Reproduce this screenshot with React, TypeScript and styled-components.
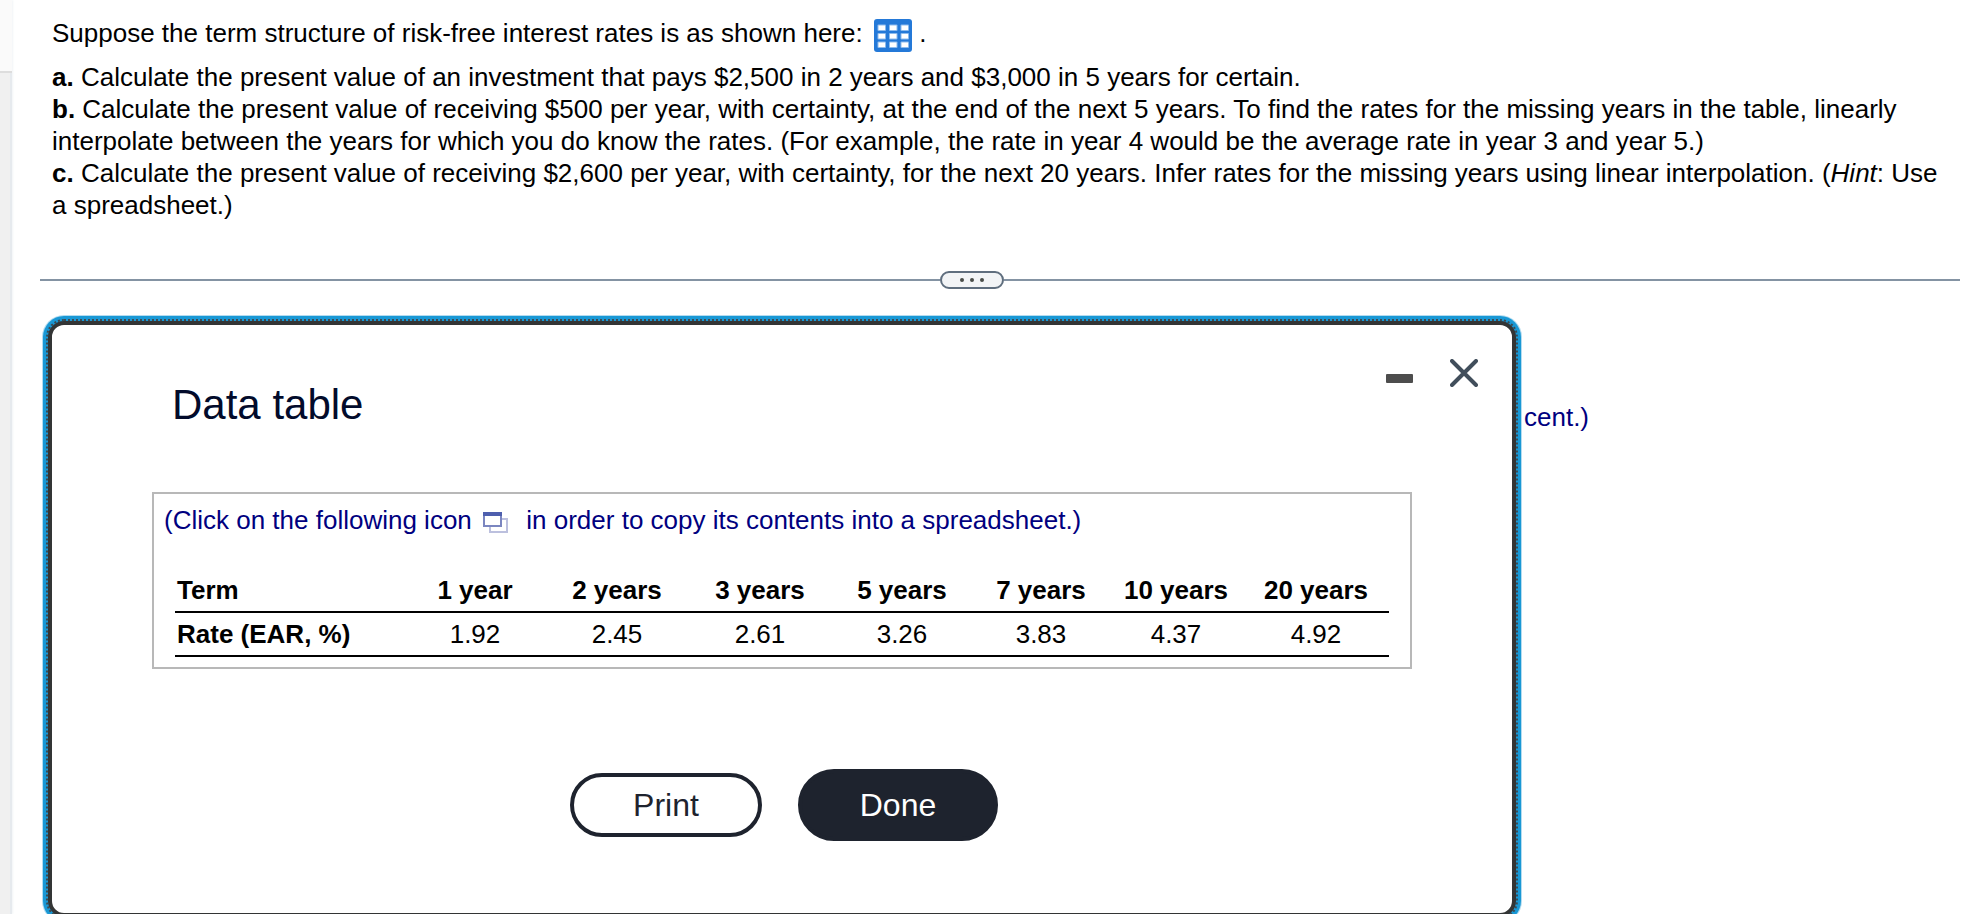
import React from "react";
import styled, { createGlobalStyle } from "styled-components";

const GlobalStyle = createGlobalStyle`
  *, *::before, *::after { box-sizing: border-box; }
  body {
    margin: 0;
    background: #ffffff;
    color: #000000;
    font-family: "Liberation Sans", Arial, sans-serif;
    font-size: 26px;
    line-height: 32px;
  }
  button { font: inherit; color: inherit; cursor: pointer; }
`;

const Page = styled.div`
  display: flex;
  height: 100vh;
  overflow: hidden;
`;

const Rail = styled.aside`
  flex: 0 0 12px;
  display: flex;
  flex-direction: column;
  border-right: 2px solid #e6eaee;
  background: #f0f0f0;
  box-shadow: 1px 0 2px #f1f4f6;
`;

const RailHead = styled.div`
  height: 73px;
  margin-right: -2px;
  border-bottom: 2px solid #dddddd;
  background: #fafafa;
`;

const Main = styled.main`
  flex: 1;
  min-width: 0;
  padding: 13px 8px 0 28px;
`;

const Question = styled.section`
  padding: 0 8px 0 12px;
`;

const Intro = styled.p`
  margin: 0;
  height: 48px;
  line-height: 40px;
`;

const Part = styled.p`
  margin: 0;
`;

const IconButton = styled.button`
  display: inline-block;
  padding: 0;
  border: 0;
  background: none;
  line-height: 0;

  svg { display: block; }
`;

const TableIconButton = styled(IconButton)`
  margin: 0 0 0 4px;
  vertical-align: -10px;
`;

const CopyIconButton = styled(IconButton)`
  margin: 0 11px 0 4px;
  vertical-align: -4px;
`;

const Divider = styled.div`
  display: flex;
  align-items: center;
  margin-top: 50px;

  &::before, &::after {
    content: "";
    flex: 900;
    height: 2px;
    background: #8493a3;
  }

  &::after { flex-grow: 956; }
`;

const Handle = styled.button`
  display: flex;
  align-items: center;
  justify-content: center;
  gap: 6px;
  width: 64px;
  height: 18px;
  padding: 0;
  border: 2px solid #5f6e7e;
  border-radius: 9px;
  background: #f2f4f6;
`;

const Dot = styled.span`
  width: 4px;
  height: 4px;
  border-radius: 2px;
  background: #4a4d4a;
`;

const Workspace = styled.div`
  display: flex;
  align-items: flex-start;
  gap: 8px;
  margin-top: 32px;
  padding-left: 8px;
`;

const Dialog = styled.section`
  flex: 0 1 1468px;
  min-width: 0;
  padding-bottom: 72px;
  border: 4px solid #333535;
  border-radius: 16px;
  outline: 2px dotted #3c4a52;
  box-shadow: 0 0 0 5px #1998d5, 0 0 0 6px #b4dcf0;
  background: #ffffff;
`;

const DialogHeader = styled.header`
  display: flex;
  align-items: flex-start;
  padding: 34px 34px 0 120px;
`;

const Title = styled.h2`
  flex: 1;
  margin: 22px 0 0;
  color: #020b2b;
  font-size: 42px;
  font-weight: 400;
  line-height: 48px;
`;

const Controls = styled.div`
  display: flex;
  gap: 36px;
`;

const DataBox = styled.div`
  margin: 63px 100px 0;
  padding: 10px;
  border: 2px solid #b8b8b8;
`;

const CopyLine = styled.p`
  margin: 0;
  color: #00007f;
`;

const RateTable = styled.table`
  width: calc(100% - 22px);
  margin: 33px 11px 0;
  border-collapse: separate;
  border-spacing: 0;
  table-layout: fixed;
`;

const Cell = styled.td`
  height: 44px;
  padding: 0;
  border-bottom: 2px solid #000000;
  text-align: center;
`;

const RowLabel = styled.th`
  height: 44px;
  padding: 0 0 0 2px;
  border-bottom: 2px solid #000000;
  text-align: left;
`;

const Actions = styled.div`
  display: flex;
  align-items: center;
  justify-content: center;
  gap: 36px;
  margin: 100px 0 0 4px;
`;

const ActionButton = styled.button<{ $primary?: boolean }>`
  width: ${(p) => (p.$primary ? 200 : 192)}px;
  height: ${(p) => (p.$primary ? 72 : 64)}px;
  padding: 0;
  border: 4px solid #1e232e;
  border-radius: 36px;
  background: ${(p) => (p.$primary ? "#1e232e" : "#ffffff")};
  color: ${(p) => (p.$primary ? "#ffffff" : "#1e232e")};
  font-size: 32px;
`;

const Rounding = styled.p`
  margin: 80px 0 0;
  color: #00007f;
`;

const columns = [
  { term: "1 year", rate: "1.92", width: 140 },
  { term: "2 years", rate: "2.45", width: 144 },
  { term: "3 years", rate: "2.61", width: 142 },
  { term: "5 years", rate: "3.26", width: 142 },
  { term: "7 years", rate: "3.83", width: 136 },
  { term: "10 years", rate: "4.37", width: 134 },
  { term: "20 years", rate: "4.92", width: 146 },
];

const TableIcon = () => (
  <svg width="38" height="33" viewBox="0 0 38 33" aria-hidden="true">
    <rect width="38" height="33" rx="3" fill="#2479d8" />
    {[6, 14.5, 23].map((y) =>
      [4, 15.5, 27].map((x) => (
        <g key={`${x}-${y}`}>
          <rect x={x - 0.5} y={y - 0.5} width="8.5" height="6.5" rx="1" fill="#8dbbed" />
          <rect x={x + 0.5} y={y + 0.5} width="6.5" height="4.5" fill="#ffffff" />
        </g>
      ))
    )}
  </svg>
);

const CopyIcon = () => (
  <svg width="25" height="21" viewBox="0 0 25 21" aria-hidden="true">
    <rect x="7" y="7" width="17" height="13" fill="#ffffff" stroke="#bcc0de" strokeWidth="2" />
    <rect x="1" y="1" width="17" height="13" fill="#ffffff" stroke="#7b86c0" strokeWidth="2" />
    <rect width="19" height="4" fill="#4e5fae" />
  </svg>
);

const MinimizeIcon = () => (
  <svg width="28" height="28" viewBox="0 0 28 28" aria-hidden="true">
    <rect y="15" width="27" height="9" rx="1" fill="#4d4d4d" />
  </svg>
);

const CloseIcon = () => (
  <svg width="28" height="28" viewBox="0 0 28 28" aria-hidden="true">
    <path d="M2 2 26 26M26 2 2 26" stroke="#414e5b" strokeWidth="4" strokeLinecap="round" />
  </svg>
);

export default function App() {
  return (
    <>
      <GlobalStyle />
      <Page>
        <Rail>
          <RailHead />
        </Rail>
        <Main>
          <Question>
            <Intro>
              Suppose the term structure of risk-free interest rates is as shown here:{" "}
              <TableIconButton type="button" aria-label="Open data table">
                <TableIcon />
              </TableIconButton>{" "}
              .
            </Intro>
            <Part>
              <b>a.</b> Calculate the present value of an investment that pays $2,500 in 2 years and
              $3,000 in 5 years for certain.
            </Part>
            <Part>
              <b>b.</b> Calculate the present value of receiving $500 per year, with certainty, at the
              end of the next 5 years. To find the rates for the missing years in the table, linearly
              interpolate between the years for which you do know the rates. (For example, the rate in
              year 4 would be the average rate in year 3 and year 5.)
            </Part>
            <Part>
              <b>c.</b> Calculate the present value of receiving $2,600 per year, with certainty, for
              the next 20 years. Infer rates for the missing years using linear interpolation. (
              <i>Hint</i>: Use a spreadsheet.)
            </Part>
          </Question>

          <Divider>
            <Handle type="button" aria-label="Resize panels">
              <Dot />
              <Dot />
              <Dot />
            </Handle>
          </Divider>

          <Workspace>
            <Dialog role="dialog" aria-labelledby="dialog-title">
              <DialogHeader>
                <Title id="dialog-title">Data table</Title>
                <Controls>
                  <IconButton type="button" aria-label="Minimize">
                    <MinimizeIcon />
                  </IconButton>
                  <IconButton type="button" aria-label="Close">
                    <CloseIcon />
                  </IconButton>
                </Controls>
              </DialogHeader>

              <DataBox>
                <CopyLine>
                  (Click on the following icon{" "}
                  <CopyIconButton type="button" aria-label="Copy table contents">
                    <CopyIcon />
                  </CopyIconButton>{" "}
                  in order to copy its contents into a spreadsheet.)
                </CopyLine>
                <RateTable>
                  <colgroup>
                    <col width={230} />
                    {columns.map((c) => (
                      <col key={c.term} width={c.width} />
                    ))}
                  </colgroup>
                  <thead>
                    <tr>
                      <RowLabel scope="col">Term</RowLabel>
                      {columns.map((c) => (
                        <Cell as="th" scope="col" key={c.term}>
                          {c.term}
                        </Cell>
                      ))}
                    </tr>
                  </thead>
                  <tbody>
                    <tr>
                      <RowLabel scope="row">Rate (EAR, %)</RowLabel>
                      {columns.map((c) => (
                        <Cell key={c.term}>{c.rate}</Cell>
                      ))}
                    </tr>
                  </tbody>
                </RateTable>
              </DataBox>

              <Actions>
                <ActionButton type="button">Print</ActionButton>
                <ActionButton type="button" $primary>
                  Done
                </ActionButton>
              </Actions>
            </Dialog>
            <Rounding>cent.)</Rounding>
          </Workspace>
        </Main>
      </Page>
    </>
  );
}
